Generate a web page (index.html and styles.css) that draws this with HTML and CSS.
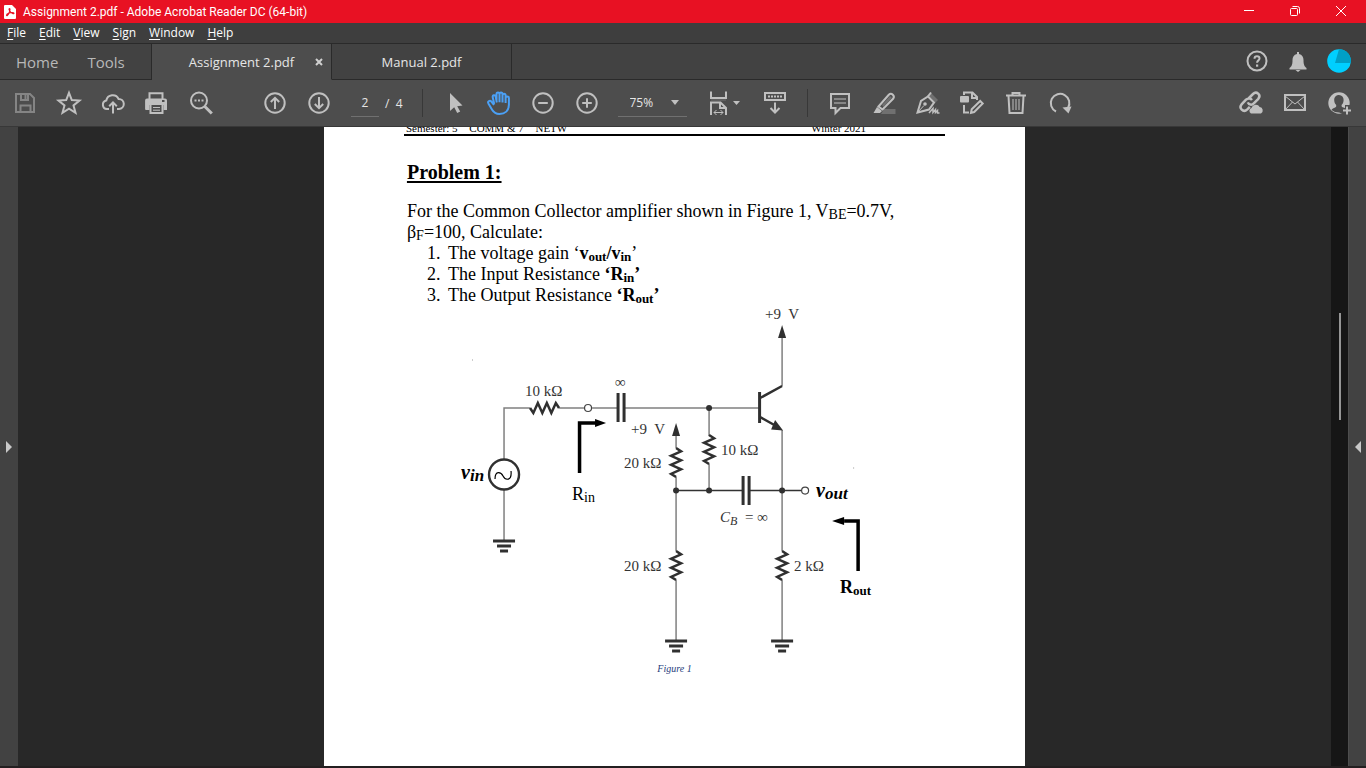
FILE: index.html
```
<!DOCTYPE html>
<html lang="en">
<head>
<meta charset="utf-8">
<title>Assignment 2.pdf - Adobe Acrobat Reader DC (64-bit)</title>
<link rel="stylesheet" href="styles.css">
</head>
<body class="app">
<header class="titlebar">
  <svg class="app-logo" width="12" height="14" viewBox="0 0 12 14" aria-hidden="true"><path d="M1 0h7l4 4v9a1 1 0 0 1-1 1H1a1 1 0 0 1-1-1V1a1 1 0 0 1 1-1z" fill="#fff"/><path d="M5.500 3.500c-1.500 0 .6 4.500 3.500 5.200 1.500.3 1.500-1.200-.8-1.200-2 0-5.700 1.300-5.700 2.700 0 1.200 1.800-.2 2.700-2.700.7-1.800 1.200-4 .3-4z" fill="none" stroke="#e81123" stroke-width="1.100"/></svg>
  <h1 class="window-title">Assignment 2.pdf - Adobe Acrobat Reader DC (64-bit)</h1>
  <div class="window-controls">
    <button aria-label="Minimize"><svg width="12" height="12" viewBox="0 0 12 12"><path d="M1 5.500h10"/></svg></button>
    <button aria-label="Restore"><svg width="12" height="12" viewBox="0 0 12 12"><rect x="1.500" y="3.500" width="7" height="7" rx="1"/><path d="M3.500 1.500h5a2 2 0 0 1 2 2v5"/></svg></button>
    <button aria-label="Close"><svg width="12" height="12" viewBox="0 0 12 12"><path d="M1 1l10 10M11 1L1 11"/></svg></button>
  </div>
</header>

<nav class="menubar" aria-label="Menu">
  <button><u>F</u>ile</button><button><u>E</u>dit</button><button><u>V</u>iew</button><button><u>S</u>ign</button><button><u>W</u>indow</button><button><u>H</u>elp</button>
</nav>

<nav class="tabs" aria-label="Documents">
  <div class="home-links"><a href="#home">Home</a><a href="#tools">Tools</a></div>
  <div class="tab tab-active"><a href="#assignment">Assignment 2.pdf</a><button class="tab-close" aria-label="Close tab"><svg width="8" height="8" viewBox="0 0 8 8"><path d="M1 1l6 6M7 1L1 7" stroke="#d0d0d0" stroke-width="2"/></svg></button></div>
  <div class="tab"><a href="#manual">Manual 2.pdf</a></div>
  <div class="account">
    <button aria-label="Help"><svg class="icon" viewBox="0 0 28 28"><circle cx="14" cy="14" r="9.500"/><path d="M11.500 11.700c0-3.300 5-3.100 5-.2 0 1.900-2.400 1.900-2.400 4.200"/><path class="solid" d="M13 17.500h2.200v2.200H13z"/></svg></button>
    <button aria-label="Notifications"><svg class="icon" viewBox="0 0 28 28"><path class="solid" d="M13 5h2v2c3.200.7 4.500 3 4.500 6 0 5 1 6.500 3 8v1.500h-17V21c2-1.500 3-3 3-8 0-3 1.300-5.300 4.500-6zM11.500 23h5l-2.500 2z"/></svg></button>
    <button aria-label="Profile"><svg class="avatar" width="24" height="24" viewBox="0 0 24 24"><circle cx="12" cy="12" r="11.800" fill="#00cfff"/><path d="M12 .2A11.800 11.800 0 0 1 23.800 14H8z" fill="#009fc6"/></svg></button>
  </div>
</nav>

<div class="toolbar" role="toolbar" aria-label="Tools">
  <div class="tools">
    <button aria-label="Save" disabled><svg class="icon" viewBox="0 0 28 28"><path d="M5 5h14l4 4v14H5zM10 5v6h7V5M14.500 6v4M9.500 23v-6.500h10V23"/></svg></button>
    <button aria-label="Star"><svg class="icon" viewBox="0 0 28 28"><path d="M14 3.800l2.800 7.200 7.700.5-6 4.900 2 7.400-6.500-4.200-6.500 4.200 2-7.400-6-4.900 7.700-.5z"/></svg></button>
    <button aria-label="Upload"><svg class="icon" viewBox="0 0 28 28"><path d="M10 20H8a4.300 4.300 0 0 1-.7-8.500A6.500 6.500 0 0 1 19.600 10 5 5 0 0 1 20 20h-2M14 24.500V14M10.200 17.200l3.800-3.800 3.800 3.800"/></svg></button>
    <button aria-label="Print"><svg class="icon" viewBox="0 0 28 28"><path d="M6.500 10V4.300h13V10"/><path class="solid" d="M4 9.500h18a2 2 0 0 1 2 2V21h-3.500v-5h-14v5H3a.9.900 0 0 1-.9-.9v-8.600a2 2 0 0 1 1.900-2z"/><path class="cut" d="M19 12h2.500"/><path d="M7.500 16v8h12v-8"/><path class="thin" d="M10 18.500h7M10 21.200h7"/></svg></button>
    <button aria-label="Find"><svg class="icon" viewBox="0 0 28 28"><circle cx="12" cy="11.500" r="8"/><path class="heavy" d="M17.800 17.500l7 7"/><path class="solid" d="M7.500 10.500h2v2h-2zM11 10.500h2v2h-2zM14.500 10.500h2v2h-2z"/></svg></button>
  </div>
  <div class="tools page-tools">
    <button aria-label="Previous page"><svg class="icon" viewBox="0 0 28 28"><circle cx="14" cy="14" r="9.700"/><path d="M14 20V9M9.800 13L14 8.800l4.200 4.200"/></svg></button>
    <button aria-label="Next page"><svg class="icon" viewBox="0 0 28 28"><circle cx="14" cy="14" r="9.700"/><path d="M14 8v11M9.800 15l4.200 4.200 4.200-4.200"/></svg></button>
    <label class="page-field"><input class="page-input" type="text" value="2" aria-label="Page number"><span>/&nbsp; 4</span></label>
  </div>
  <div class="tools divided">
    <button aria-label="Select"><svg class="icon" viewBox="0 0 28 28"><path class="solid" d="M9 4v18l4.200-3.700 3 5.800 3-1.500-3-5.400 5.300-.7z"/></svg></button>
    <button class="selected" aria-label="Hand"><svg class="icon" viewBox="0 0 28 28"><path d="M9 16l-2.400-3.200c-1.700-2-4.300-.5-3.200 1.600l3.700 6.300c1.800 3 4 4.200 7.300 4.200 5.600 0 9.500-3.300 9.500-9.200V9c0-2.100-3.300-2.100-3.300 0v5M9.200 15L7.700 8.200c-.5-2.200 2.500-2.800 3-.6l1.100 5.900M11.500 11.500V5.200c0-2.200 3-2.200 3 0v8M14.500 5.500c0-2.700 3-2.700 3 0v8M17.500 6.500c0-2.300 3.100-2.300 3.100 0V14"/></svg></button>
    <button aria-label="Zoom out"><svg class="icon" viewBox="0 0 28 28"><circle cx="14" cy="14" r="9.700"/><path d="M9.200 14h9.600"/></svg></button>
    <button aria-label="Zoom in"><svg class="icon" viewBox="0 0 28 28"><circle cx="14" cy="14" r="9.700"/><path d="M9.200 14h9.600M14 9.200v9.600"/></svg></button>
    <div class="zoom-box"><select class="zoom-select" aria-label="Zoom level"><option>75%</option></select><svg width="8" height="5" viewBox="0 0 8 5"><path d="M0 0h8L4 5z" fill="#c0c0c0"/></svg></div>
    <button class="with-caret" aria-label="Page fit"><svg class="icon" viewBox="0 0 28 28"><path d="M6 2.500V9h15V2.500M6 26V13.500h9.500L21 19v7M15 13.500V19h6"/><path class="thin" d="M9 23.500h9M11.500 21L9 23.500l2.500 2.500M15.500 21l2.500 2.500-2.500 2.500"/><path class="faint" d="M6 11h15"/><path class="solid" d="M28 12h7l-3.500 4z"/></svg></button>
    <button aria-label="Read mode"><svg class="icon" viewBox="0 0 28 28"><rect x="4" y="4" width="20" height="7"/><path class="dots" d="M7 7.500h14"/><path d="M14 13.500V23M9.500 19l4.500 4.500 4.500-4.500"/></svg></button>
  </div>
  <div class="tools divided">
    <button aria-label="Comment"><svg class="icon" viewBox="0 0 28 28"><path d="M5 5h18v14h-8.500l-5 5v-5H5z"/><path class="thin" d="M8 10h12M8 14h12"/></svg></button>
    <button aria-label="Highlight"><svg class="icon" viewBox="0 0 28 28"><path class="fill-faint" d="M14 20h11.500v5H11z"/><path d="M8.500 17.500L18.800 5.800q2-2 4 0t.3 4L12.500 20.500z"/><path class="fill-faint" d="M12 16l8-9 2 2-8.500 9z"/><path class="solid" d="M7 18l5 4-2 2H3.500z"/></svg></button>
    <button aria-label="Sign"><svg class="icon" viewBox="0 0 28 28"><path class="fill-faint" d="M17 4l7 7-3 3-7-7z"/><path d="M3.500 23.500L7 12l7-4.500 6 6-5 7z"/><path class="thin" d="M3.500 23.500l6.500-7"/><circle class="solid" cx="11" cy="15" r="1.800"/><path d="M13.500 8l3.500-4.500"/><path class="scribble" d="M15 24l4-4.500v4l2.500-3v3l2-2v2.500h2"/></svg></button>
    <button aria-label="Edit PDF"><svg class="icon" viewBox="0 0 28 28"><path d="M6 6V3.500h8.500L19 8v3M14 4v5h5M6 16v7.500h5"/><rect class="solid" x="2" y="7" width="9" height="6.500" rx="1"/><path d="M13 23.800l.7-3.500 8.500-8.300 2.500 2.500-8.500 8.500z"/></svg></button>
    <button aria-label="Delete"><svg class="icon" viewBox="0 0 28 28"><path d="M4 6.500h20M10.500 6V4h7v2M6.500 7l1 17h13l1-17"/><path class="thin" d="M11 10v11M14 10v11M17 10v11"/></svg></button>
    <button aria-label="Rotate"><svg class="icon" viewBox="0 0 28 28"><path d="M10 22.500A9.300 9.300 0 1 1 22 19"/><path class="solid" d="M16.500 18.500l9-1-3 7z"/></svg></button>
  </div>
  <div class="tools share-tools">
    <button aria-label="Share link"><svg class="icon" viewBox="0 0 28 28"><path class="link" d="M11.500 9.500l4.500-4.500c3.500-3.500 8.500 1 5.300 4.800l-4.500 4.600c-2 2-5 1.500-6-1M15 11c-1.500-2-4-2.200-6-.3l-4.200 4.400c-3.500 4 1.500 9 5.500 5.300l2.500-2.500"/><path class="solid" d="M14 24.500a3 3 0 0 1 .5-5.500 4.500 4.500 0 0 1 8.200-1 3.500 3.500 0 0 1 1.300 6.500z"/></svg></button>
    <button aria-label="Email"><svg class="icon" viewBox="0 0 28 28"><rect x="4" y="6" width="20" height="15"/><path class="thin" d="M4 7l10 8 10-8M4 21l7.500-8M24 21l-7.500-8"/></svg></button>
    <button aria-label="Add people"><svg class="icon" viewBox="0 0 28 28"><circle class="solid" cx="14" cy="14" r="10.700"/><path class="hole" d="M14 6c3 0 4.600 2.200 4.600 5 0 2.300-.8 3.800-2 5v1.200c0 1 3 1.300 5 2.300v4l-3.500 1.500-4-1.500c-3 0-5.500-.8-7.500-2.500.8-2.200 4.600-2.300 4.600-3.800v-1.200c-1.200-1.200-2-2.700-2-5 0-2.800 1.800-5 4.800-5z"/><path class="hole" d="M17 19h3v-3h5v3h3v6H17z"/><path d="M22 17.500v8M18 21.500h8"/></svg></button>
  </div>
</div>

<main class="workspace">
  <button class="side-panel" aria-label="Show navigation pane"><svg width="6" height="12" viewBox="0 0 6 12"><path d="M0 0l6 6-6 6z" fill="#c8c8c8"/></svg></button>
  <div class="viewer">
    <article class="sheet">
      <div class="running-head"><span>Semester: 5<sup>th</sup> &nbsp;COMM &amp; 7<sup>th</sup> &nbsp;NETW</span><span>Winter 2021</span></div>
      <h2>Problem 1:</h2>
      <div class="problem">
        <p>For the Common Collector amplifier shown in Figure 1, V<sub>BE</sub>=0.7V,<br>β<sub>F</sub>=100, Calculate:</p>
        <ol>
          <li>The voltage gain ‘<b>v<sub>out</sub>/v<sub>in</sub></b>’</li>
          <li>The Input Resistance <b>‘R<sub>in</sub>’</b></li>
          <li>The Output Resistance <b>‘R<sub>out</sub>’</b></li>
        </ol>
      </div>
      <figure class="circuit">
        <svg viewBox="404 306 541 355" role="img" aria-label="Common collector amplifier circuit">
          <defs>
            <path id="resistor" class="part" d="M0 0l5 3.300-10 4.500 10 4.500-10 4.500 10 4.500-10 4.500L0 29"/>
            <path id="ground" class="plate" d="M-11 0h22M-7 5H7M-4 10h8"/>
            <path id="supply" class="ink" d="M0 0l4 13h-8z"/>
          </defs>
          <path class="wire" d="M504 459v-51h26M559 408h26M592 408h26M624 408h135M709 408v28M709 464v27M504 489v51M676 435v13M676 477v74M676 580v60M782 386v-50M782 430v121M782 580v60"/>
          <path class="bus" d="M676 490.500h67M749 490.500h52"/>
          <use href="#resistor" transform="translate(530 408) rotate(-90) scale(-1 1)"/>
          <use href="#resistor" x="709" y="435"/><use href="#resistor" x="676" y="448"/>
          <use href="#resistor" x="676" y="551"/><use href="#resistor" x="782" y="551"/>
          <use href="#ground" x="504" y="541"/><use href="#ground" x="676" y="641"/><use href="#ground" x="782" y="641"/>
          <use href="#supply" x="676" y="423"/><use href="#supply" x="782" y="325"/>
          <path class="plate" d="M618 393v29M624 393v29M743 476v29M749 476v29M759.500 392v31"/>
          <path class="part" d="M760 398l22-12M760 417l16 9"/><path class="ink" d="M775 420l8 10.500-12-1z"/>
          <circle class="ink" cx="709" cy="408" r="3"/><circle class="ink" cx="676" cy="490.500" r="3"/><circle class="ink" cx="709" cy="490.500" r="3"/><circle class="ink" cx="782" cy="490.500" r="3"/>
          <circle class="terminal" cx="588" cy="408" r="3.500"/><circle class="terminal" cx="805" cy="490.500" r="3.500"/>
          <circle class="source" cx="504" cy="474.500" r="15"/>
          <path class="wave" d="M495 479c0-9 6-7 8-3s9 6 8-5"/>
          <path class="pointer" d="M579.500 473v-50H596M858 571v-50h-14"/><path d="M595 419l11 4-11 4zM844 517l-12 4 12 4z"/>
          <path class="speck" d="M472 360h1M853 468h1"/>
          <g class="labels">
            <text x="765" y="319">+9&#160; V</text><text x="525" y="396">10 kΩ</text><text x="615" y="387">∞</text>
            <text x="631" y="434">+9&#160; V</text><text x="624" y="468">20 kΩ</text><text x="721" y="455">10 kΩ</text>
            <text x="720" y="522"><tspan class="italic">C</tspan><tspan class="italic small" dy="3">B</tspan><tspan dy="-3"> &#160;= ∞</tspan></text>
            <text x="624" y="571">20 kΩ</text><text x="794" y="571">2 kΩ</text>
          </g>
          <text class="signal" x="461" y="479">v<tspan class="signal-sub" dy="2">in</tspan></text>
          <text class="signal" x="816" y="497">v<tspan class="signal-sub" dy="2">out</tspan></text>
          <text class="resistance" x="572" y="500">R<tspan class="resistance-sub" dy="2">in</tspan></text>
          <text class="resistance bold" x="840" y="593">R<tspan class="resistance-sub" dy="2">out</tspan></text>
        </svg>
        <figcaption>Figure 1</figcaption>
      </figure>
    </article>
  </div>
  <div class="scroll-track" aria-hidden="true"><div class="scroll-thumb"></div></div>
  <button class="side-panel side-right" aria-label="Show tools pane"><svg width="6" height="12" viewBox="0 0 6 12"><path d="M6 0L0 6l6 6z" fill="#c8c8c8"/></svg></button>
</main>
</body>
</html>
```
FILE: styles.css
```
* { box-sizing: border-box; }
.app {
  margin: 0;
  height: 100vh;
  display: flex;
  flex-direction: column;
  overflow: hidden;
  background: #282828;
  border-bottom: 2px solid #231f20;
  color: #e6e6e6;
  font-family: "Open Sans", "Noto Sans", sans-serif;
  font-size: 12px;
}
button, input, select { font: inherit; color: inherit; background: none; border: 0; padding: 0; margin: 0; border-radius: 0; }
button { display: flex; align-items: center; justify-content: center; }
a { color: inherit; text-decoration: none; }
svg { display: block; flex: none; }

.titlebar { flex: 0 0 23px; display: flex; align-items: center; padding-left: 4px; background: #e81123; color: #fff; }
.window-title { flex: 1; margin: 0 0 0 7px; font-family: Roboto, sans-serif; font-size: 12px; line-height: 20px; font-weight: 400; }
.window-controls { display: flex; align-self: stretch; padding-bottom: 2px; }
.window-controls button { width: 46px; }
.window-controls path, .window-controls rect { fill: none; stroke: #fff; stroke-width: 1; }
.window-controls { padding-right: 2px; }

.menubar { flex: 0 0 21px; display: flex; gap: 13px; padding-left: 7px; background: #3e3e3e; border-bottom: 1px solid #2a2a2a; color: #fff; }
.menubar button { display: block; line-height: 20px; }
.menubar u { text-underline-offset: 2px; }

.tabs { flex: 0 0 36px; display: flex; background: #424242; font-size: 13px; }
.home-links { width: 152px; display: flex; gap: 29px; align-items: center; padding-left: 16px; border-right: 1px solid #2a2a2a; border-bottom: 1px solid #2a2a2a; color: #b8b8b8; font-size: 15px; }
.tab { position: relative; width: 180px; display: flex; align-items: center; justify-content: center; border-right: 1px solid #2a2a2a; border-bottom: 1px solid #2a2a2a; }
.tab-active { background: #4d4d4d; border-bottom-color: #4d4d4d; }
.tab-close { position: absolute; right: 8px; top: 14px; }
.account { flex: 1; display: flex; justify-content: flex-end; align-items: center; padding: 0 7px 2px 0; border-bottom: 1px solid #2a2a2a; }
.account button { width: 41px; }

.icon { width: 28px; height: 28px; overflow: visible; fill: none; stroke: #c0c0c0; stroke-width: 2; }
.icon .solid { fill: #c0c0c0; stroke: none; }
.icon .hole { fill: #4d4d4d; stroke: none; }
.icon .thin { stroke-width: 1; }
.icon .heavy { stroke-width: 3; }
.icon .link { stroke-width: 2.500; }
.icon .scribble { stroke-width: 1.500; }
.icon .dots { stroke-dasharray: 2 1; }
.icon .cut { stroke: #4d4d4d; }
.icon .faint { stroke: #707070; stroke-width: 1; }
.icon .fill-faint { fill: #707070; stroke: none; }

.toolbar { flex: 0 0 47px; display: flex; align-items: center; padding: 0 5px 0 3px; background: #4d4d4d; border-bottom: 1px solid #383838; }
.tools { display: flex; align-items: center; }
.tools button { width: 44px; height: 44px; }
.tools button:disabled .icon { stroke: #858585; }
.tools .selected .icon { stroke: #4ba0f5; }
.page-tools { margin-left: 30px; }
.page-field { display: flex; align-items: center; gap: 6px; margin: 0 19px 0 10px; }
.page-input { width: 28px; height: 28px; text-align: center; border-bottom: 1px solid #707070; }
.divided { border-left: 1px solid #383838; height: 28px; padding-left: 10px; }
.zoom-box { width: 69px; height: 28px; display: flex; align-items: center; margin: 0 10px 0 9px; border-bottom: 1px solid #707070; }
.zoom-select { appearance: none; width: 53px; height: 27px; padding-left: 12px; font-size: 12px; }
.tools .with-caret { margin-right: 12px; }
.divided + .divided { margin-left: 10px; }
.share-tools { margin-left: auto; }

.workspace { flex: 1; min-height: 0; display: flex; }
.side-panel { flex: 0 0 18px; background: #424242; }
.side-right { border-left: 1px solid #4d4d4d; }
.viewer { flex: 1; min-width: 0; display: flex; justify-content: center; overflow: hidden; }
.sheet { width: 53.400%; min-width: 600px; padding: 0 80px; background: #fff; color: #000; font-family: "Liberation Serif", serif; }
.running-head { height: 9px; display: flex; justify-content: space-between; align-items: flex-end; padding: 0 79px 0 2px; border-bottom: 2px solid #000; overflow: hidden; font-size: 11px; line-height: 12px; }
.running-head sup { font-size: 8px; line-height: 0; }
.sheet h2 { margin: 24px 0 17px 3px; font-size: 20px; line-height: 24px; text-decoration: underline; text-decoration-thickness: 2px; text-underline-offset: 2px; text-decoration-skip-ink: none; }
.problem { padding-left: 3px; font-size: 18px; line-height: 21px; }
.problem p { margin: 0; white-space: nowrap; }
.problem sub { font-size: 14px; line-height: 0; vertical-align: -2px; }
.problem b sub { font-size: 13px; }
.problem ol { margin: 0; padding-left: 38px; }
.problem li { padding-left: 3px; }
.circuit { margin: 0; }
.circuit svg { width: 100%; height: auto; }
.wire { fill: none; stroke: #808080; stroke-width: 1.500; }
.bus { stroke: #333; stroke-width: 1.500; }
.part { fill: none; stroke: #303030; stroke-width: 2.500; }
.plate { fill: none; stroke: #303030; stroke-width: 3; }
.ink { fill: #303030; }
.terminal { fill: #fff; stroke: #444; stroke-width: 1.200; }
.source { fill: none; stroke: #303030; stroke-width: 2.400; }
.wave { fill: none; stroke: #000; stroke-width: 1.200; }
.pointer { fill: none; stroke: #000; stroke-width: 3.500; }
.speck { stroke: #999; }
.labels { font-size: 15px; fill: #333; }
.italic { font-style: italic; }
.small { font-size: 12px; }
.signal { font-size: 20px; font-weight: 700; font-style: italic; }
.signal-sub { font-size: 17px; }
.resistance { font-size: 18px; }
.resistance-sub { font-size: 14px; }
.bold { font-weight: 700; }
.bold .resistance-sub { font-size: 13px; }
.circuit figcaption { text-align: center; font-size: 10px; line-height: 16px; font-style: italic; color: #1f407d; }

.scroll-track { flex: 0 0 17px; display: flex; flex-direction: column; align-items: center; padding-top: 186px; background: #161616; }
.scroll-thumb { width: 2px; height: 107px; background: #959595; }
```
